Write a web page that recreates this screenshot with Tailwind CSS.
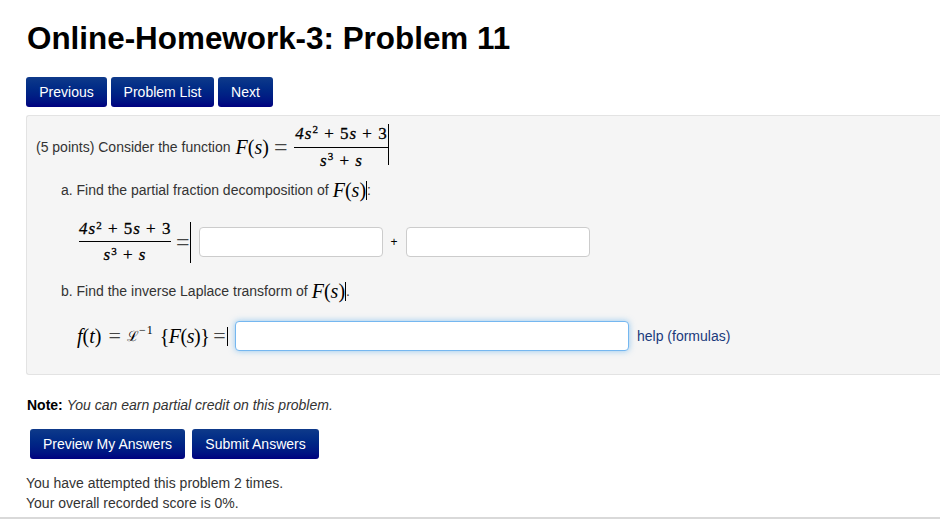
<!DOCTYPE html>
<html lang="en">
  <head>
    <meta charset="UTF-8" />
    <title>Online-Homework-3: Problem 11</title>
    <script src="https://cdn.jsdelivr.net/npm/@tailwindcss/browser@4"></script>
  </head>

  <body class="h-[519px] w-[940px] overflow-hidden bg-white font-['Liberation_Sans',sans-serif] text-[14px] text-[#333]">
    <div class="h-[517px] overflow-hidden pl-[26px]">
      <h1 class="h-[77px] pt-[18px] pl-px text-[31.4px] leading-[42px] font-bold text-black">Online-Homework-3: Problem 11</h1>

      <!-- Nav -->
      <div class="flex h-[30px] gap-1">
        <a class="flex w-[81px] items-center justify-center rounded-[3px] bg-gradient-to-b from-[#0f3a8a] to-[#000080] text-white">Previous</a>
        <a class="flex w-[103px] items-center justify-center rounded-[3px] bg-gradient-to-b from-[#0f3a8a] to-[#000080] text-white">Problem List</a>
        <a class="flex w-[55px] items-center justify-center rounded-[3px] bg-gradient-to-b from-[#0f3a8a] to-[#000080] text-white">Next</a>
      </div>

      <!-- Problem -->
      <div class="mt-2 h-[260px] rounded-l-[3px] border border-r-0 border-[#e3e3e3] bg-[#f5f5f5] pl-[9px]">
        <div class="flex h-[60px] items-center pt-[2px]">
          <span>(5 points) Consider the function</span>
          <span class="ml-[5px] font-['Liberation_Serif',serif] text-[20px] text-black"><i>F</i>(<i>s</i>)</span>
          <span class="ml-[5px] font-['Liberation_Serif',serif] text-[24px] leading-none text-[#444]">=</span>
          <span class="ml-[7px] flex w-[94px] flex-col items-center font-['Liberation_Serif',serif] text-[17px] leading-[20px] tracking-[1px] whitespace-nowrap text-black [-webkit-text-stroke:0.3px_black]">
            <span class="w-full border-b border-black pb-[3px] text-center"><i>4s</i><sup class="text-[11px]">2</sup> + 5<i>s</i> + 3</span>
            <span class="pt-[3px]"><i>s</i><sup class="text-[11px]">3</sup> + <i>s</i></span>
          </span>
          <span class="mt-[-5px] h-[41px] w-px bg-black"></span>
        </div>

        <div class="flex h-[28px] items-center pl-[25px]">
          <span>a. Find the partial fraction decomposition of</span>
          <span class="ml-1 font-['Liberation_Serif',serif] text-[20px] text-black"><i>F</i>(<i>s</i>)</span>
          <span class="h-[19px] w-px bg-black"></span><span>:</span>
        </div>

        <div class="mt-[14px] flex h-[48px] items-center pl-[43px]">
          <span class="flex w-[92px] flex-col items-center font-['Liberation_Serif',serif] text-[17px] leading-[20px] tracking-[1px] whitespace-nowrap text-black [-webkit-text-stroke:0.3px_black]">
            <span class="w-full border-b border-black pb-[2px] text-center"><i>4s</i><sup class="text-[11px]">2</sup> + 5<i>s</i> + 3</span>
            <span class="pt-[3px]"><i>s</i><sup class="text-[11px]">3</sup> + <i>s</i></span>
          </span>
          <span class="ml-[5px] font-['Liberation_Serif',serif] text-[24px] leading-none text-[#444]">=</span>
          <span class="h-[41px] w-px bg-black"></span>
          <input class="ml-2 h-[30px] w-[184px] rounded-[4px] border border-[#ccc] bg-white" />
          <span class="mx-[8px] w-[7px] text-[12px] leading-none text-black">+</span>
          <input class="h-[30px] w-[184px] rounded-[4px] border border-[#ccc] bg-white" />
        </div>

        <div class="mt-[11px] flex h-[28px] items-center pl-[25px]">
          <span>b. Find the inverse Laplace transform of</span>
          <span class="ml-1 font-['Liberation_Serif',serif] text-[20px] text-black"><i>F</i>(<i>s</i>)</span>
          <span class="h-[19px] w-px bg-black"></span><span>.</span>
        </div>

        <div class="mt-[16px] flex h-[30px] items-center pl-[41px]">
          <span class="flex w-[150px] items-center font-['Liberation_Serif',serif] text-[20px] text-black">
            <span><i>f</i>(<i>t</i>)</span>
            <span class="ml-[7px] text-[22px] leading-none text-[#444]">=</span>
            <span class="ml-[6px] font-['DejaVu_Serif',serif] text-[14px]">ℒ</span>
            <sup class="top-[-6px] text-[12px] tracking-[1px]">−1</sup>
            <span class="ml-[6px] tracking-[-0.5px]">{<i>F</i>(<i>s</i>)}</span>
            <span class="ml-[4px] text-[22px] leading-none text-[#444]">=</span>
          </span>
          <span class="h-[19px] w-px bg-black"></span>
          <input class="ml-[7px] h-[30px] w-[394px] rounded-[4px] border border-[#75b7f0] bg-white shadow-[0_0_6px_rgba(82,168,236,0.6)]" />
          <a class="ml-2 text-[#1a3a7c]">help (formulas)</a>
        </div>
      </div>

      <p class="mt-[20px] h-[20px] pl-px leading-[20px]"><b class="text-black">Note:</b> <i>You can earn partial credit on this problem.</i></p>

      <div class="mt-[14px] flex h-[30px] gap-[7px] pl-1">
        <button class="w-[155px] rounded-[3px] bg-gradient-to-b from-[#0f3a8a] to-[#000080] text-white">Preview My Answers</button>
        <button class="w-[127px] rounded-[3px] bg-gradient-to-b from-[#0f3a8a] to-[#000080] text-white">Submit Answers</button>
      </div>

      <p class="mt-[14px] leading-[20px]">You have attempted this problem 2 times.<br />Your overall recorded score is 0%.</p>
    </div>
    <div class="h-[2px] bg-[#d9d9d9]"></div>
  </body>
</html>
